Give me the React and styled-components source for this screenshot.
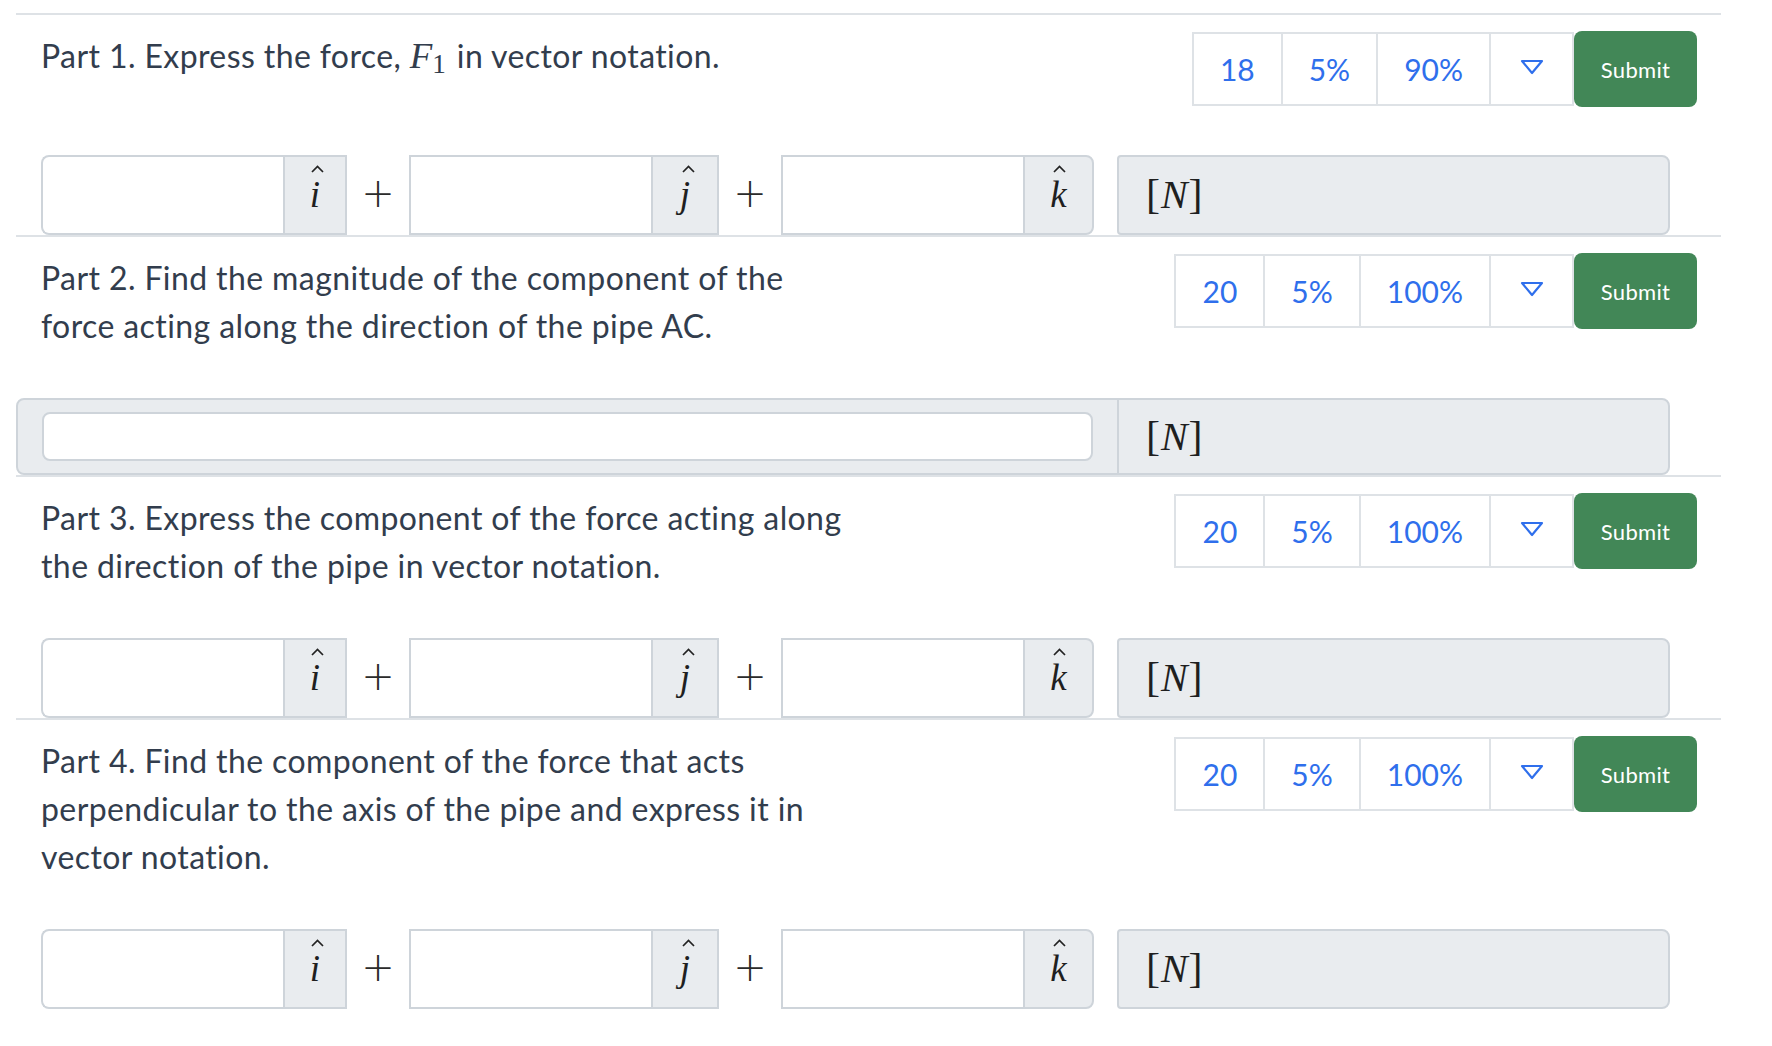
import React from 'react'
import styled, { createGlobalStyle } from 'styled-components'

const GlobalStyle = createGlobalStyle`
  html, body {
    margin: 0;
    padding: 0;
    background: #ffffff;
  }
  body {
    font-family: Lato, "Open Sans", sans-serif;
    color: #323d4d;
  }
`

const Page = styled.main`
  padding: 13px 0 0 16px;
  width: 1705px;
`

const Section = styled.section`
  border-top: 2px solid #dee2e6;
  padding-top: 17px;
`

const Header = styled.div`
  display: flex;
  justify-content: space-between;
  align-items: flex-start;
  padding: 0 24px 0 25px;
  margin-bottom: 48px;
`

const Title = styled.p`
  margin: 0;
  width: 805px;
  font-size: 32px;
  letter-spacing: 0.4px;
  line-height: 48px;
  color: #323d4d;
`

const MathVar = styled.span`
  font-family: "Liberation Serif", "DejaVu Serif", serif;
  font-style: italic;
  font-size: 1.15em;
  letter-spacing: 0;
`

const Sub = styled.span`
  font-family: "Liberation Serif", "DejaVu Serif", serif;
  font-size: 0.85em;
  vertical-align: -0.2em;
  margin-right: 2px;
`

const Scores = styled.div`
  display: flex;
  align-items: center;
  margin-top: -1px;
`

const ScoreCell = styled.div`
  box-sizing: border-box;
  height: 74px;
  padding: 0 26px;
  margin-left: -2px;
  display: flex;
  align-items: center;
  justify-content: center;
  border: 2px solid #dee2e6;
  background: #fff;
  color: #2f6fec;
  font-size: 30px;
`

const DropCell = styled(ScoreCell)`
  width: 85px;
  padding: 0;
  svg {
    margin-top: -4px;
  }
`

const SubmitButton = styled.button`
  box-sizing: border-box;
  width: 123px;
  height: 76px;
  border: none;
  border-radius: 8px;
  background: #428757;
  color: #ffffff;
  font-family: Lato, "Open Sans", sans-serif;
  font-size: 22px;
  letter-spacing: 0.3px;
  cursor: pointer;
`

const VecRow = styled.div`
  display: flex;
  align-items: stretch;
  height: 80px;
  margin-left: 25px;
  width: 1629px;
`

const Field = styled.div`
  box-sizing: border-box;
  width: 242px;
  border: 2px solid #ced4da;
  border-right: none;
  background: #fff;
  border-radius: ${({ $first }) => ($first ? '8px 0 0 8px' : '0')};
`

const Addon = styled.div`
  box-sizing: border-box;
  width: ${({ $w }) => $w}px;
  border: 2px solid #ced4da;
  background: #e9ecef;
  display: flex;
  align-items: center;
  justify-content: center;
  border-radius: ${({ $last }) => ($last ? '0 8px 8px 0' : '0')};
`

const Plus = styled.div`
  width: 62px;
  display: flex;
  align-items: center;
  justify-content: center;
  font-family: "DejaVu Sans", sans-serif;
  font-size: 40px;
  font-weight: 200;
  color: #2b2b2b;
  padding-bottom: 4px;
`

const HatWrap = styled.span`
  display: inline-flex;
  flex-direction: column;
  align-items: center;
  font-family: "Liberation Serif", "DejaVu Serif", serif;
  font-style: italic;
  color: #1f1f1f;
  margin-bottom: 12px;
  svg {
    display: block;
    margin-left: ${({ $shift }) => $shift}px;
    margin-bottom: 4px;
  }
`

const HatBase = styled.span`
  font-size: 37px;
  line-height: 36px;
`

const UnitBox = styled.div`
  box-sizing: border-box;
  flex: 1;
  margin-left: ${({ $joined }) => ($joined ? '-2px' : '23px')};
  border: 2px solid #ced4da;
  border-radius: ${({ $joined }) => ($joined ? '0 8px 8px 0' : '4px 8px 8px 4px')};
  background: #e9ecef;
  display: flex;
  align-items: center;
  padding-left: 27px;
`

const UnitText = styled.span`
  font-family: "Liberation Serif", "DejaVu Serif", serif;
  font-size: 42px;
  color: #1f1f1f;
  margin-top: -2px;
  span {
    font-size: 0.95em;
    margin: 0 1px;
  }
`

const ScalarRow = styled.div`
  display: flex;
  height: 77px;
  width: 1654px;
`

const Well = styled.div`
  box-sizing: border-box;
  width: 1103px;
  padding: 12px 24px;
  border: 2px solid #ced4da;
  border-radius: 8px 0 0 8px;
  background: #e9ecef;
  display: flex;
`

const WellField = styled.div`
  flex: 1;
  border: 2px solid #ced4da;
  border-radius: 8px;
  background: #fff;
`

const Hat = ({ letter, shift = 4 }) => (
  <HatWrap $shift={shift}>
    <svg width="13" height="8" viewBox="0 0 13 8" aria-hidden="true">
      <path d="M1 7 L6.5 1.5 L12 7" fill="none" stroke="#222" strokeWidth="1.7" />
    </svg>
    <HatBase>{letter}</HatBase>
  </HatWrap>
)

const Unit = () => (
  <UnitText>
    [<MathVar>N</MathVar>]
  </UnitText>
)

const VectorInput = () => (
  <VecRow>
    <Field $first />
    <Addon $w={64}>
      <Hat letter="i" shift={4} />
    </Addon>
    <Plus>+</Plus>
    <Field />
    <Addon $w={68}>
      <Hat letter="j" shift={6} />
    </Addon>
    <Plus>+</Plus>
    <Field />
    <Addon $w={71} $last>
      <Hat letter="k" shift={2} />
    </Addon>
    <UnitBox>
      <Unit />
    </UnitBox>
  </VecRow>
)

const ScalarInput = () => (
  <ScalarRow>
    <Well>
      <WellField />
    </Well>
    <UnitBox $joined>
      <Unit />
    </UnitBox>
  </ScalarRow>
)

const parts = [
  {
    id: 1,
    title: (
      <>
        Part 1. Express the force, <MathVar>F</MathVar>
        <Sub>1</Sub> in vector notation.
      </>
    ),
    scores: ['18', '5%', '90%'],
    kind: 'vector',
  },
  {
    id: 2,
    title: 'Part 2. Find the magnitude of the component of the force acting along the direction of the pipe AC.',
    scores: ['20', '5%', '100%'],
    kind: 'scalar',
  },
  {
    id: 3,
    title: 'Part 3. Express the component of the force acting along the direction of the pipe in vector notation.',
    scores: ['20', '5%', '100%'],
    kind: 'vector',
  },
  {
    id: 4,
    title: 'Part 4. Find the component of the force that acts perpendicular to the axis of the pipe and express it in vector notation.',
    scores: ['20', '5%', '100%'],
    kind: 'vector',
  },
]

const App = () => {
  return (
    <>
      <GlobalStyle />
      <Page>
        {parts.map((p) => (
          <Section key={p.id}>
            <Header>
              <Title>{p.title}</Title>
              <Scores>
                {p.scores.map((s, i) => (
                  <ScoreCell key={i}>{s}</ScoreCell>
                ))}
                <DropCell>
                  <svg width="24" height="16" viewBox="0 0 24 16">
                    <path d="M2 2 L22 2 L12 14 Z" fill="none" stroke="#2f6fec" strokeWidth="2.2" strokeLinejoin="round" />
                  </svg>
                </DropCell>
                <SubmitButton>Submit</SubmitButton>
              </Scores>
            </Header>
            {p.kind === 'vector' ? <VectorInput /> : <ScalarInput />}
          </Section>
        ))}
      </Page>
    </>
  )
}

export default App
